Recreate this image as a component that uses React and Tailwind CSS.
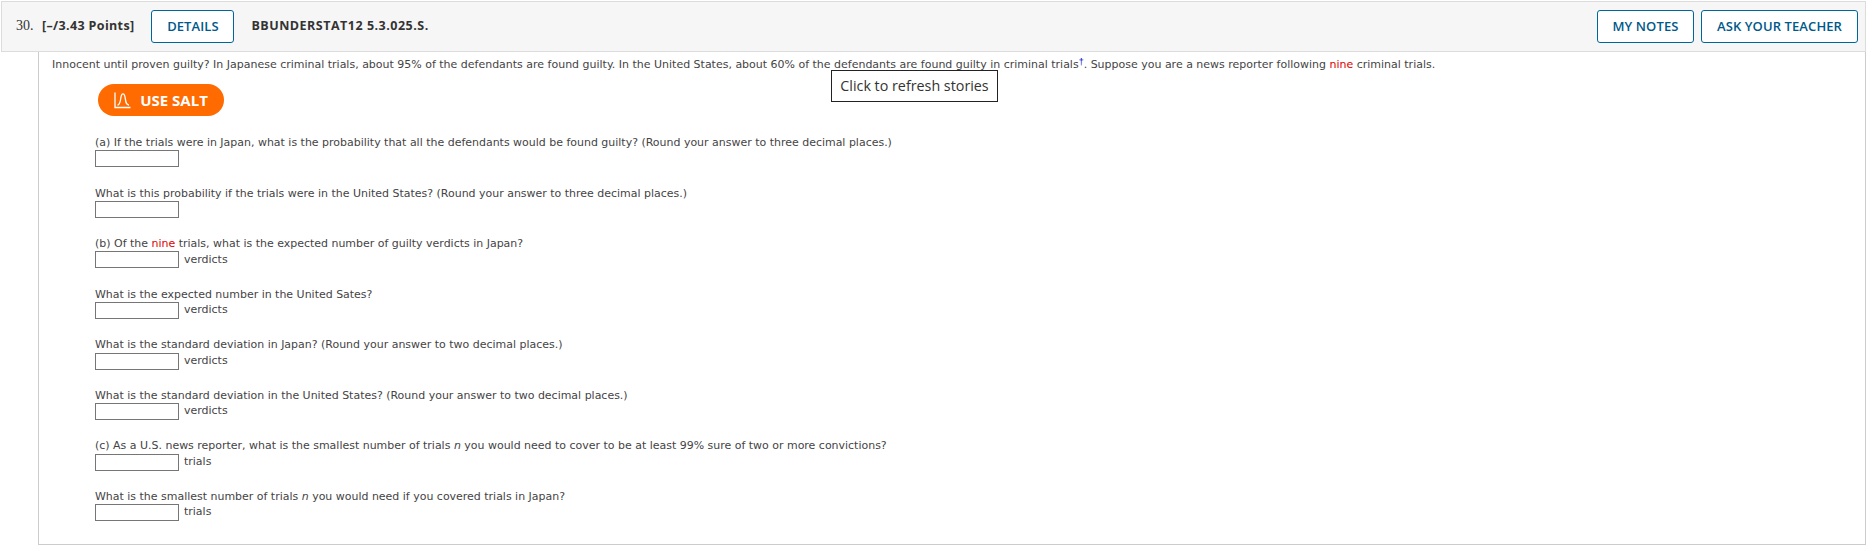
const Part = ({ children, unit, last }) => (
  <div className={last ? "" : "mb-[17px]"}>
    <div className="h-[16px] leading-[18px] whitespace-nowrap">{children}</div>
    <div className="flex items-center h-[17.57px]">
      <div className="w-[84px] h-[17px] border border-[#767676] bg-white" />
      {unit && <span className="ml-[5px]">{unit}</span>}
    </div>
  </div>
);

const Btn = ({ children, className = "" }) => (
  <div className={`h-[33px] flex items-center justify-center border border-[#00659c] rounded-[3px] bg-white text-[#00598a] text-[13px] font-semibold tracking-[0.1px] ${className}`}>
    {children}
  </div>
);

export default function App() {
  return (
    <div className="relative w-[1867px] h-[556px] bg-white overflow-hidden text-[#444] text-[10.97px] font-['DejaVu_Sans','Verdana',sans-serif]">
      <div className="mx-[1px] mt-[1px] h-[51px] bg-[#f6f6f6] border border-[#dcdcdc] flex items-center pl-[14px] pr-[7px] font-['Open_Sans','Noto_Sans',sans-serif]">
        <span className="w-[26px] -mt-[3px] text-[14px] text-[#333] font-['Liberation_Serif','DejaVu_Serif',serif]">30.</span>
        <span className="text-[12.5px] font-bold text-[#333] tracking-[0.35px]">[–/3.43 Points]</span>
        <Btn className="w-[83px] ml-[17px]">DETAILS</Btn>
        <span className="text-[12.5px] font-bold text-[#333] ml-[17px] tracking-[0.5px]">BBUNDERSTAT12 5.3.025.S.</span>
        <div className="ml-auto flex gap-[7px]">
          <Btn className="w-[97px]">MY NOTES</Btn>
          <Btn className="w-[157px]">ASK YOUR TEACHER</Btn>
        </div>
      </div>
      <div className="ml-[38px] mr-[1px] h-[493px] border-l border-r border-b border-[#cccccc] pt-[5px] pl-[13px]">
        <p className="h-[16px] leading-[16px] whitespace-nowrap text-[10.99px]">
          Innocent until proven guilty? In Japanese criminal trials, about 95% of the defendants are found guilty. In the United States, about 60% of the defendants are found guilty in criminal trials<span className="text-[#0000cc] text-[9px] font-['Liberation_Sans',sans-serif] align-[3px] leading-none">†</span>. Suppose you are a news reporter following <span className="text-[#e00000]">nine</span> criminal trials.
        </p>
        <div className="ml-[46px] mt-[11px] w-[126px] h-[32px] rounded-[16px] bg-[#ff6b00] flex items-center justify-center gap-[9px] text-white font-['Open_Sans','Noto_Sans',sans-serif] font-bold text-[15px]">
          <svg width="17" height="17" viewBox="0 0 17 17" fill="none" stroke="white" strokeWidth="1.3">
            <path d="M1 0.5V15.5H16.5" />
            <path d="M3.5 13C6 13 6.2 10 6.8 6C7.2 3 8 1.8 9 1.8C10 1.8 10.8 3 11.2 6C11.8 10 12 13 15 13" />
          </svg>
          <span>USE SALT</span>
        </div>
        <div className="ml-[43px] mt-[18px]">
          <Part>(a) If the trials were in Japan, what is the probability that all the defendants would be found guilty? (Round your answer to three decimal places.)</Part>
          <Part>What is this probability if the trials were in the United States? (Round your answer to three decimal places.)</Part>
          <Part unit="verdicts">(b) Of the <span className="text-[#e00000]">nine</span> trials, what is the expected number of guilty verdicts in Japan?</Part>
          <Part unit="verdicts">What is the expected number in the United Sates?</Part>
          <Part unit="verdicts">What is the standard deviation in Japan? (Round your answer to two decimal places.)</Part>
          <Part unit="verdicts">What is the standard deviation in the United States? (Round your answer to two decimal places.)</Part>
          <Part unit="trials">(c) As a U.S. news reporter, what is the smallest number of trials <i>n</i> you would need to cover to be at least 99% sure of two or more convictions?</Part>
          <Part unit="trials" last>What is the smallest number of trials <i>n</i> you would need if you covered trials in Japan?</Part>
        </div>
      </div>
      <div className="absolute left-[831px] top-[70px] w-[167px] h-[32px] bg-white border border-[#222] flex items-center justify-center text-[14.3px] text-[#333] font-['Open_Sans','Noto_Sans',sans-serif]">
        Click to refresh stories
      </div>
    </div>
  );
}
